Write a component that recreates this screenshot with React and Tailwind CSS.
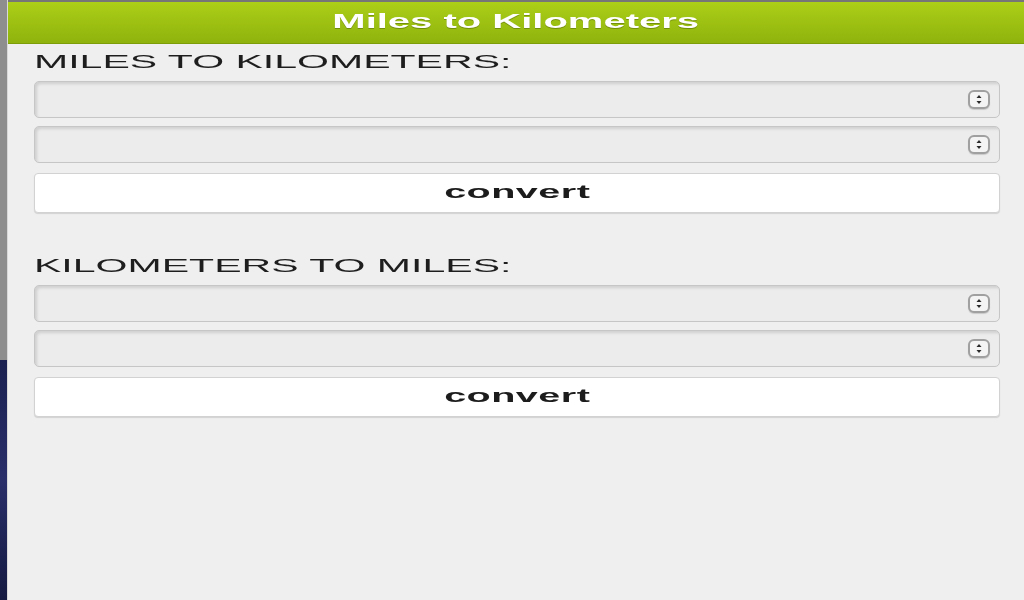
const Spinner = () => (
  <div className="w-[22px] h-[19px] rounded-[6px] border-2 border-[#a0a0a0] bg-[#f4f4f4] flex items-center justify-center shadow-[0_1px_1px_rgba(0,0,0,0.15)]">
    <svg width="10" height="13" viewBox="0 0 10 13">
      <path d="M5 2 L7.5 5 H2.5 Z" fill="#2a2a2a" />
      <path d="M5 11 L7.5 8 H2.5 Z" fill="#2a2a2a" />
    </svg>
  </div>
);

const NumberField = () => (
  <div className="h-[37px] rounded-[5px] border border-[#c6c6c6] bg-[#ececec] shadow-[inset_2px_2px_3px_rgba(0,0,0,0.12)] flex items-center justify-end pr-[9px]">
    <Spinner />
  </div>
);

const ConvertButton = () => (
  <button className="h-[40px] w-full rounded-[4px] border border-[#d2d2d2] bg-white shadow-[0_1px_1px_rgba(0,0,0,0.12)] flex items-center justify-center">
    <span className="inline-block scale-x-[2.2] text-[18px] font-bold text-[#1c1c1c] tracking-[0.2px] leading-none pb-[2px]">
      convert
    </span>
  </button>
);

const Section = ({ label }) => (
  <div className="flex flex-col">
    <div className="h-[24px] leading-[24px] text-[19px] text-[#1e1e1e] whitespace-nowrap">
      <span className="inline-block origin-left scale-x-[2.16]">{label}</span>
    </div>
    <div className="mt-[7px] flex flex-col gap-[8px]">
      <NumberField />
      <NumberField />
    </div>
    <div className="mt-[10px]">
      <ConvertButton />
    </div>
  </div>
);

export default function App() {
  return (
    <div
      className="w-[1024px] h-[600px] flex overflow-hidden bg-[#efefef]"
      style={{ fontFamily: '"Liberation Sans", Arial, sans-serif' }}
    >
      <div className="w-[7px] flex flex-col">
        <div className="h-[360px] bg-[#8e8e8e]" />
        <div className="flex-1 bg-gradient-to-b from-[#1b2150] via-[#2a2f6a] to-[#141a40]" />
      </div>
      <div className="w-[1px] bg-[#d8d8d8]" />
      <div className="flex-1 flex flex-col">
        <div className="h-[44px] border-t-2 border-t-[#767676] border-b border-b-[#7c9c08] bg-gradient-to-b from-[#accf18] to-[#8fb30c] flex items-center justify-center">
          <span className="inline-block scale-x-[2.0] text-[20px] font-bold text-white leading-none pb-[3px] drop-shadow-[0_1px_0_rgba(0,0,0,0.25)]">
            Miles to Kilometers
          </span>
        </div>
        <div className="pl-[26px] pr-[24px] pt-[6px] flex flex-col gap-[41px]">
          <Section label="MILES TO KILOMETERS:" />
          <Section label="KILOMETERS TO MILES:" />
        </div>
      </div>
    </div>
  );
}
